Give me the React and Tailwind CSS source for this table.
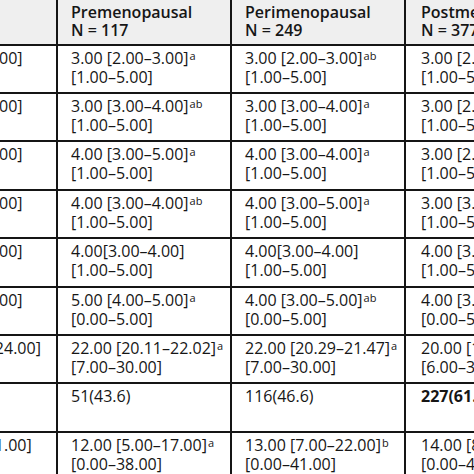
import React from "react";

const Sup = ({ children }) => (
  <span className="relative -top-[4px] ml-[1px] text-[11px] leading-none">{children}</span>
);

const rows = [
  [
    ["3.00 [2.00–3.00]", "", ""],
    ["3.00 [2.00–3.00]", "a", "[1.00–5.00]"],
    ["3.00 [2.00–3.00]", "ab", "[1.00–5.00]"],
    ["3.00 [2.00–3.00]", "b", "[1.00–5.00]"],
  ],
  [
    ["3.00 [3.00–4.00]", "", ""],
    ["3.00 [3.00–4.00]", "ab", "[1.00–5.00]"],
    ["3.00 [3.00–4.00]", "a", "[1.00–5.00]"],
    ["3.00 [2.00–4.00]", "b", "[1.00–5.00]"],
  ],
  [
    ["4.00 [3.00–4.00]", "", ""],
    ["4.00 [3.00–5.00]", "a", "[1.00–5.00]"],
    ["4.00 [3.00–4.00]", "a", "[1.00–5.00]"],
    ["3.00 [2.00–4.00]", "b", "[1.00–5.00]"],
  ],
  [
    ["4.00 [3.00–4.00]", "", ""],
    ["4.00 [3.00–4.00]", "ab", "[1.00–5.00]"],
    ["4.00 [3.00–5.00]", "a", "[1.00–5.00]"],
    ["3.00 [3.00–4.00]", "b", "[1.00–5.00]"],
  ],
  [
    ["4.00 [3.00–4.00]", "", ""],
    ["4.00[3.00–4.00]", "", "[1.00–5.00]"],
    ["4.00[3.00–4.00]", "", "[1.00–5.00]"],
    ["4.00 [3.00–4.00]", "", "[1.00–5.00]"],
  ],
  [
    ["4.00 [3.00–5.00]", "", ""],
    ["5.00 [4.00–5.00]", "a", "[0.00–5.00]"],
    ["4.00 [3.00–5.00]", "ab", "[0.00–5.00]"],
    ["4.00 [3.00–5.00]", "b", "[0.00–5.00]"],
  ],
  [
    ["21.00 [9.00–24.00]", "", ""],
    ["22.00 [20.11–22.02]", "a", "[7.00–30.00]"],
    ["22.00 [20.29–21.47]", "a", "[7.00–30.00]"],
    ["20.00 [17.00–23.00]", "b", "[6.00–30.00]"],
  ],
  [
    ["", "", ""],
    ["51(43.6)", "", ""],
    ["116(46.6)", "", ""],
    ["227(61.2)", "", "", true],
  ],
  [
    ["9.00 [5.00–21.00]", "", ""],
    ["12.00 [5.00–17.00]", "a", "[0.00–38.00]"],
    ["13.00 [7.00–22.00]", "b", "[0.00–41.00]"],
    ["14.00 [8.00–22.00]", "b", "[0.00–40.00]"],
  ],
];

const headers = [
  ["", ""],
  ["Premenopausal", "N = 117"],
  ["Perimenopausal", "N = 249"],
  ["Postmenopausal", "N = 377"],
];

export default function App() {
  return (
    <div className="w-[474px] h-[474px] overflow-hidden bg-white font-['Open_Sans',sans-serif] text-[16px] leading-[19px] text-[#161616]">
      <div className="ml-[-108px] inline-grid grid-cols-[164px_172px_172px_172px] grid-rows-[43.7px_repeat(9,46.4px)] gap-[2px] bg-[#151515]">
        {headers.map((h, i) => (
          <div
            key={"h" + i}
            className={
              "bg-[#efefef] pt-[2.5px] leading-[18px] text-[16px] font-semibold whitespace-nowrap " +
              (i === 3 ? "pl-[15px]" : "pl-[13px]")
            }
          >
            <div>{h[0]}</div>
            <div>{h[1]}</div>
          </div>
        ))}
        {rows.map((r, ri) =>
          r.map((c, ci) => (
            <div
              key={ri + "-" + ci}
              className={
                "bg-white pt-[3px] whitespace-nowrap " +
                (ci === 3 ? "pl-[15px]" : "pl-[13px]") +
                (c[3] ? " font-bold" : "")
              }
            >
              <div>
                {c[0]}
                {c[1] ? <Sup>{c[1]}</Sup> : null}
              </div>
              {c[2] ? <div>{c[2]}</div> : null}
            </div>
          ))
        )}
      </div>
    </div>
  );
}
